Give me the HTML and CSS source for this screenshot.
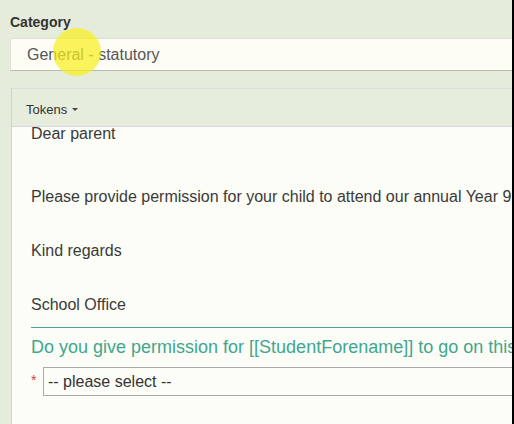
FILE: index.html
```html
<!DOCTYPE html>
<html lang="en">
<head>
<meta charset="utf-8">
<title>Template</title>
<link rel="stylesheet" href="styles.css">
</head>
<body>
<div class="frame">
  <div class="field">
    <label class="label">Category</label>
    <div class="input">General - statutory</div>
  </div>
  <div class="panel">
    <div class="toolbar">
      <span class="tokens">Tokens <span class="caret"></span></span>
    </div>
    <div class="editor">
      <p class="p first">Dear parent</p>
      <p class="p second">Please provide permission for your child to attend our annual Year 9</p>
      <p class="p">Kind regards</p>
      <p class="p">School Office</p>
      <div class="rule"></div>
      <div class="question">Do you give permission for [[StudentForename]] to go on this</div>
      <div class="answer">
        <span class="req">*</span>
        <div class="select">-- please select --</div>
      </div>
    </div>
  </div>
  <div class="highlight"></div>
</div>
</body>
</html>
```
FILE: styles.css
```css
html, body {
  margin: 0;
  padding: 0;
  background: #e6ecdb;
}
body {
  font-family: "Liberation Sans", Arial, sans-serif;
  color: #333;
}
.frame {
  position: relative;
  width: 512px;
  height: 424px;
  border-right: 2px solid #000;
  overflow: hidden;
  background: #e6ecdb;
  padding-top: 14px;
  box-sizing: content-box;
}
.field {
  padding-left: 10px;
}
.label {
  display: block;
  font-size: 14px;
  font-weight: bold;
  line-height: 16px;
  color: #333;
}
.input {
  margin-top: 8px;
  height: 33px;
  box-sizing: border-box;
  border: 1px solid #dde2d4;
  border-bottom-color: #b8bcb0;
  border-right: none;
  background: #fdfdf6;
  padding-left: 16px;
  font-size: 16px;
  line-height: 31px;
  color: #555;
}
.panel {
  margin-top: 17px;
  margin-left: 11px;
  border-top: 1px solid #d9dfe0;
  border-left: 1px solid #cfd4c8;
}
.toolbar {
  padding: 11px 0 10px 14px;
  height: 16px;
  background: #e7eddd;
}
.tokens {
  font-size: 13px;
  line-height: 16px;
  color: #333;
}
.caret {
  display: inline-block;
  width: 0;
  height: 0;
  border-left: 3px solid transparent;
  border-right: 3px solid transparent;
  border-top: 3px solid #444;
  vertical-align: 3px;
  margin-left: 1px;
}
.editor {
  border-top: 1px solid #d4d8de;
  background: #fcfdf6;
  height: 300px;
  padding-left: 19px;
}
.p {
  margin: 36px 0 0;
  font-size: 16px;
  line-height: 18px;
  color: #3a3a3a;
  white-space: nowrap;
}
.p.first {
  margin-top: 0;
  line-height: 14px;
}
.p.second {
  margin-top: 47px;
}
.rule {
  margin-top: 13px;
  height: 1px;
  background: #4aa39c;
}
.question {
  margin-top: 8px;
  font-size: 18px;
  line-height: 22px;
  color: #3fa68f;
  white-space: nowrap;
}
.answer {
  margin-top: 9px;
  display: flex;
  align-items: center;
}
.req {
  color: #e0403a;
  font-size: 14px;
  width: 12px;
  line-height: 14px;
  margin-top: -3px;
}
.select {
  flex: 1;
  height: 29px;
  box-sizing: border-box;
  border: 1px solid #a9a9a9;
  border-right: none;
  background: #fdfdf8;
  padding-left: 4px;
  font-size: 16px;
  line-height: 27px;
  color: #333;
}
.highlight {
  position: absolute;
  left: 53px;
  top: 28px;
  width: 48px;
  height: 48px;
  border-radius: 50%;
  background: rgba(248, 238, 30, 0.72);
}
```
